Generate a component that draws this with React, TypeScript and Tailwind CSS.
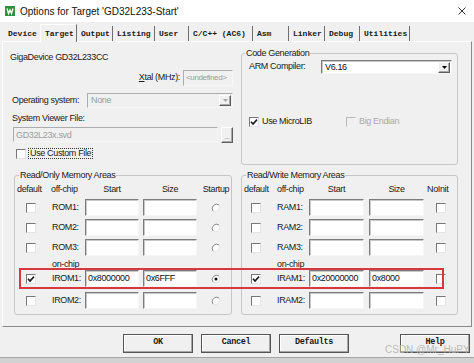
import React from "react"

const sunken =
  "border border-t-[#7c7c7c] border-l-[#7c7c7c] border-r-[#f6f6f6] border-b-[#f6f6f6] shadow-[inset_1px_1px_0_#c8c8c8]"
const sunkenOff =
  "border border-t-[#acacac] border-l-[#acacac] border-r-[#f6f6f6] border-b-[#f6f6f6]"
const raised =
  "border border-t-white border-l-white border-r-[#5e5e5e] border-b-[#5e5e5e] shadow-[inset_-1px_-1px_0_#a8a8a8]"

function Check({ checked = false, disabled = false }: { checked?: boolean; disabled?: boolean }) {
  return (
    <div
      className={`flex h-[10px] w-[10px] items-center justify-center ${
        disabled
          ? "bg-[#f0f0f0] border border-t-[#b8b8b8] border-l-[#b8b8b8] border-r-[#f4f4f4] border-b-[#f4f4f4]"
          : "bg-white border border-t-[#777] border-l-[#777] border-r-[#e4e4e4] border-b-[#e4e4e4]"
      }`}
    >
      {checked && (
        <svg width="8" height="8" viewBox="0 0 8 8">
          <path d="M1 3.8 L3 6 L7 1.6" fill="none" stroke="#1a1a1a" strokeWidth="1.6" />
        </svg>
      )}
    </div>
  )
}

function Radio({ checked = false }: { checked?: boolean }) {
  return (
    <svg width="10" height="10" viewBox="0 0 10 10">
      <circle cx="5" cy="5" r="4.3" fill="#fafafa" />
      <path d="M2 8 A4.3 4.3 0 0 1 8 2" fill="none" stroke="#8a8a8a" strokeWidth="1" />
      <path d="M8 2 A4.3 4.3 0 0 1 2 8" fill="none" stroke="#e2e2e2" strokeWidth="1" />
      {checked && <circle cx="5" cy="5" r="1.5" fill="#111" />}
    </svg>
  )
}

function Field({ className = "", value = "", disabled = false }: { className?: string; value?: string; disabled?: boolean }) {
  return (
    <div
      className={`${className} flex items-start pl-[2px] pt-[1px] leading-[12px] ${
        disabled ? `bg-[#f0f0f0] text-[#9c9c9c] ${sunkenOff}` : `bg-white text-[#111] ${sunken}`
      }`}
    >
      {value}
    </div>
  )
}

function Select({ className = "", value, disabled = false }: { className?: string; value: string; disabled?: boolean }) {
  return (
    <div
      className={`${className} flex items-center ${
        disabled ? `bg-[#f0f0f0] text-[#9c9c9c] ${sunkenOff}` : `bg-white text-[#111] ${sunken}`
      }`}
    >
      <span className="flex-1 pl-[3px] leading-none">{value}</span>
      <div className={`mr-[1px] flex h-[11px] w-[12px] items-center justify-center bg-[#f0f0f0] ${raised}`}>
        <svg width="5" height="3" viewBox="0 0 5 3">
          <path d="M0 0 H5 L2.5 3Z" fill={disabled ? "#a8a8a8" : "#000"} />
        </svg>
      </div>
    </div>
  )
}

function Btn({ label }: { label: string }) {
  return (
    <div className="flex h-[19px] w-[70px] items-center justify-center pb-[2px] border border-[#555] bg-[#f0f0f0] shadow-[inset_-1px_-1px_0_#a6a6a6,inset_1px_1px_0_#fff] font-['Liberation_Mono',monospace] text-[8.5px] font-bold text-[#1a1a1a]">
      {label}
    </div>
  )
}

const tabs = [
  { name: "Device", w: "w-[36px]" },
  { name: "Target", w: "w-[37px]", active: true },
  { name: "Output", w: "w-[36px]" },
  { name: "Listing", w: "w-[42px]" },
  { name: "User", w: "w-[34px]" },
  { name: "C/C++ (AC6)", w: "w-[64px]" },
  { name: "Asm", w: "w-[36px]" },
  { name: "Linker", w: "w-[36px]" },
  { name: "Debug", w: "w-[35px]" },
  { name: "Utilities", w: "w-[50px]" },
]

type Row = { label: string; start?: string; size?: string; on?: boolean }

const roRows: Row[] = [{ label: "ROM1:" }, { label: "ROM2:" }, { label: "ROM3:" }]
const rwRows: Row[] = [{ label: "RAM1:" }, { label: "RAM2:" }, { label: "RAM3:" }]

function RoRow({ r, className = "" }: { r: Row; className?: string }) {
  return (
    <div className={`flex h-[17px] items-center ${className}`}>
      <div className="w-[35px] pl-[11px]">
        <Check checked={r.on} />
      </div>
      <div className="w-[35px] pl-[2px]">{r.label}</div>
      <Field className="h-full w-[54px]" value={r.start} />
      <Field className="ml-[4px] h-full w-[54px]" value={r.size} />
      <div className="flex flex-1 justify-center pl-[4px]">
        <Radio checked={r.on} />
      </div>
    </div>
  )
}

function RwRow({ r, className = "" }: { r: Row; className?: string }) {
  return (
    <div className={`flex h-[17px] items-center ${className}`}>
      <div className="w-[35px] pl-[9px]">
        <Check checked={r.on} />
      </div>
      <div className="w-[32px]">{r.label}</div>
      <Field className="h-full w-[55px]" value={r.start} />
      <Field className="ml-[5px] h-full w-[55px]" value={r.size} />
      <div className="flex-1 pl-[12px]">
        <Check />
      </div>
    </div>
  )
}

export default function App() {
  return (
    <div className="relative flex h-[363px] w-[474px] flex-col overflow-hidden bg-[#f0f0f0] font-['Liberation_Sans',Arial,sans-serif] text-[9px] tracking-[-0.35px] text-[#1a1a1a]">
      {/* title bar */}
      <div className="flex h-[22px] items-center bg-white pl-[5px] pr-[8px]">
        <svg width="10" height="10" viewBox="0 0 10 10">
          <rect width="10" height="10" fill="#2f8f3a" />
          <path d="M2 2.5 L3.5 7.5 L5 4 L6.5 7.5 L8 2.5" fill="none" stroke="#fff" strokeWidth="1.3" />
        </svg>
        <span className="ml-[5px] flex-1 text-[10px] tracking-normal text-[#111]">Options for Target 'GD32L233-Start'</span>
        <svg width="8" height="8" viewBox="0 0 8 8">
          <path d="M0.5 0.5 L7.5 7.5 M7.5 0.5 L0.5 7.5" stroke="#333" strokeWidth="1" />
        </svg>
      </div>

      {/* tabs */}
      <div className="flex h-[19px] items-end pl-[4px] font-['Liberation_Mono',monospace] text-[8px] font-bold tracking-normal">
        {tabs.map((t) =>
          t.active ? (
            <div
              key={t.name}
              className={`${t.w} relative z-10 -mb-[1px] flex h-[18px] items-center border border-b-0 border-t-white border-l-white border-r-[#6e6e6e] bg-[#f0f0f0] pl-[4px]`}
            >
              {t.name}
            </div>
          ) : (
            <div
              key={t.name}
              className={`${t.w} flex h-[15px] items-center border-r ${t.name === "Device" ? "border-r-transparent" : "border-r-[#6e6e6e]"} pl-[4px]`}
            >
              {t.name}
            </div>
          )
        )}
      </div>

      {/* page */}
      <div className="mx-[2px] flex h-[286px] flex-col border border-t-white border-l-white border-r-[#8a8a8a] border-b-[#8a8a8a]">
        <div className="flex h-[123px]">
          {/* device column */}
          <div className="flex w-[238px] flex-col">
            <div className="mt-[10px] h-[11px] pl-[7px] leading-[11px]">GigaDevice GD32L233CC</div>
            <div className="mt-[7px] flex h-[16px] items-center justify-end gap-[3px] pr-[8px]">
              <span>
                <span className="underline">X</span>tal (MHz):
              </span>
              <Field className="h-full w-[50px] text-[8px]" value="<undefined>" disabled />
            </div>
            <div className="mt-[7px] flex h-[15px] items-center pl-[9px]">
              <span className="w-[75px]">Operating system:</span>
              <Select className="h-full w-[146px]" value="None" disabled />
            </div>
            <div className="mt-[5px] h-[11px] pl-[9px] leading-[11px]">System Viewer File:</div>
            <div className="mt-[3px] flex h-[15px] pl-[10px]">
              <Field className="h-full w-[205px]" value="GD32L23x.svd" disabled />
              <div className={`ml-[3px] flex h-[16px] w-[12px] items-end justify-center bg-[#f0f0f0] text-[7px] leading-[10px] text-[#8a8a8a] ${raised}`}>
                ...
              </div>
            </div>
            <div className="mt-[6px] flex h-[11px] items-center pl-[13px]">
              <Check />
              <span className="ml-[2px] border border-dotted border-[#333] px-[1px] leading-[9px]">Use Custom File</span>
            </div>
          </div>

          {/* code generation */}
          <fieldset className="mt-[6px] h-[117px] w-[217px] rounded-[3px] border border-[#c6c6c6]">
            <legend className="ml-[3px] px-[1px] leading-[11px]">Code Generation</legend>
            <div className="mt-[1px] flex h-[14px] items-center pl-[7px]">
              <span className="w-[72px]">ARM Compiler:</span>
              <Select className="h-full w-[131px]" value="V6.16" />
            </div>
            <div className="mt-[42px] flex h-[11px] items-center pl-[7px]">
              <div className="flex w-[97px] items-center">
                <Check checked />
                <span className="ml-[3px]">Use MicroLIB</span>
              </div>
              <Check disabled />
              <span className="ml-[3px] text-[#a8a8a8]">Big Endian</span>
            </div>
          </fieldset>
        </div>

        <div className="mt-[5px] flex">
          {/* read only */}
          <fieldset className="ml-[11px] h-[145px] w-[218px] rounded-[3px] border border-[#c6c6c6]">
            <legend className="ml-[4px] px-[1px] leading-[11px]">Read/Only Memory Areas</legend>
            <div className="mt-[3px] flex h-[11px] items-center">
              <div className="w-[35px] pl-[2px]">default</div>
              <div className="w-[35px] pl-[1px]">off-chip</div>
              <div className="w-[54px] text-center">Start</div>
              <div className="ml-[4px] w-[54px] text-center">Size</div>
              <div className="flex-1 pl-[4px] text-center">Startup</div>
            </div>
            <RoRow r={roRows[0]} className="mt-[4px]" />
            <RoRow r={roRows[1]} className="mt-[3px]" />
            <RoRow r={roRows[2]} className="mt-[3px]" />
            <div className="mt-[3px] h-[11px] pl-[37px] leading-[11px]">on-chip</div>
            <RoRow r={{ label: "IROM1:", start: "0x8000000", size: "0x6FFF", on: true }} />
            <RoRow r={{ label: "IROM2:" }} className="mt-[5px]" />
          </fieldset>

          {/* read write */}
          <fieldset className="ml-[9px] h-[145px] w-[217px] rounded-[3px] border border-[#c6c6c6]">
            <legend className="ml-[4px] px-[1px] leading-[11px]">Read/Write Memory Areas</legend>
            <div className="mt-[3px] flex h-[11px] items-center">
              <div className="w-[35px] pl-[2px]">default</div>
              <div className="w-[32px]">off-chip</div>
              <div className="w-[55px] text-center">Start</div>
              <div className="ml-[5px] w-[55px] text-center">Size</div>
              <div className="flex-1 pl-[3px]">NoInit</div>
            </div>
            <RwRow r={rwRows[0]} className="mt-[4px]" />
            <RwRow r={rwRows[1]} className="mt-[3px]" />
            <RwRow r={rwRows[2]} className="mt-[3px]" />
            <div className="mt-[3px] h-[11px] pl-[35px] leading-[11px]">on-chip</div>
            <RwRow r={{ label: "IRAM1:", start: "0x20000000", size: "0x8000", on: true }} />
            <RwRow r={{ label: "IRAM2:" }} className="mt-[5px]" />
          </fieldset>
        </div>
      </div>

      {/* buttons */}
      <div className="mt-[7px] flex pl-[123px]">
        <Btn label="OK" />
        <div className="ml-[8px]">
          <Btn label="Cancel" />
        </div>
        <div className="ml-[8px]">
          <Btn label="Defaults" />
        </div>
        <div className="ml-[51px]">
          <Btn label="Help" />
        </div>
      </div>

      <div className="mt-[4px] flex-1 border-t border-[#a4a4a4] bg-[#d2d2d2]" />

      {/* annotation + watermark overlays */}
      <div className="absolute left-[19px] top-[268px] h-[21px] w-[425px] border-2 border-[#d8373f]" />
      <div className="absolute left-[385px] top-[344px] text-[10px] leading-[11px] tracking-normal text-[#b4b4b4]/90">CSDN @Mr_HuPY</div>
    </div>
  )
}
